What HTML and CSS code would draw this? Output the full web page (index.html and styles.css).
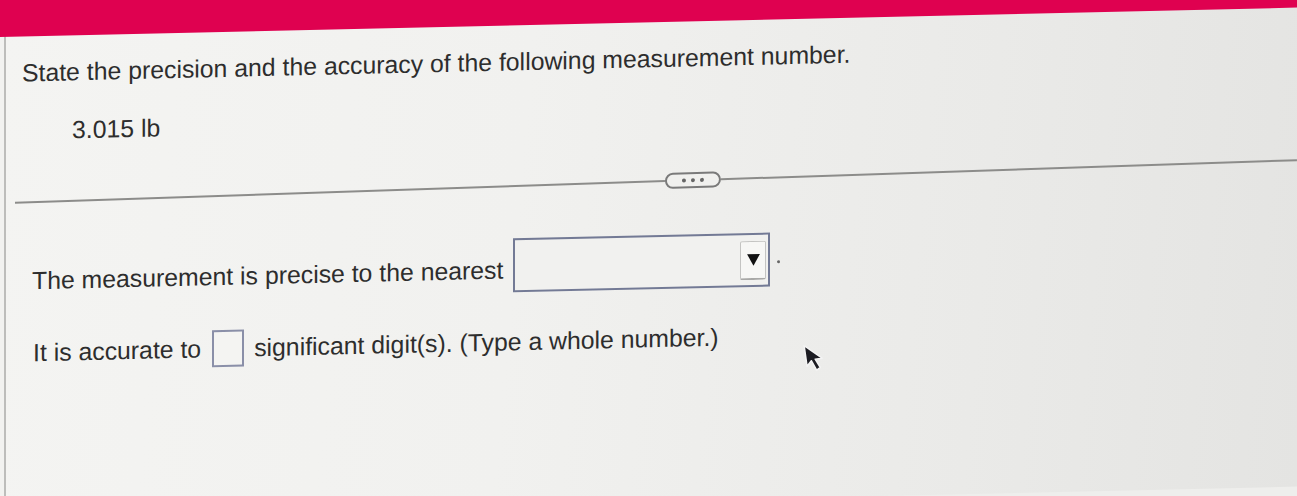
FILE: index.html
```html
<!DOCTYPE html>
<html lang="en">
<head>
<meta charset="utf-8">
<title>Measurement question</title>
<link rel="stylesheet" href="styles.css">
</head>
<body>
<div class="screen">
  <div class="topbar"></div>
  <div class="content">
    <p class="question">State the precision and the accuracy of the following measurement number.</p>
    <p class="value">3.015 lb</p>
    <div class="divider">
      <span class="rule short"></span>
      <span class="pill"><i></i><i></i><i></i></span>
      <span class="rule long"></span>
    </div>
    <div class="row row-precise">
      <span class="label">The measurement is precise to the nearest</span>
      <span class="select">
        <span class="select-btn">
          <svg width="15" height="15" viewBox="0 0 14 14"><path d="M1 2 H13 L7 13 Z" fill="#111"/></svg>
        </span>
      </span>
      <span class="dot"></span>
    </div>
    <div class="row row-accurate">
      <span>It is accurate to</span>
      <span class="answer"></span>
      <span>significant digit(s). (Type a whole number.)</span>
    </div>
  </div>
</div>
<svg class="cursor" width="24" height="30" viewBox="0 0 24 30">
  <path d="M2 1 L2 22 L7 17 L11 27 L15 25 L11 16 L18 16 Z" fill="#1c1c22" stroke="#f4f4f4" stroke-width="1.5" stroke-linejoin="round"/>
</svg>
</body>
</html>
```

FILE: styles.css
```css
html, body {
  margin: 0;
  padding: 0;
  overflow: hidden;
}
body {
  width: 1297px;
  height: 496px;
  background: #eeeeec;
  font-family: "Liberation Sans", Arial, sans-serif;
  color: #2d2d2d;
  position: relative;
}
.screen {
  width: 1297px;
  height: 526px;
  transform: skewY(-1.3deg);
  transform-origin: 0 0;
  background: linear-gradient(95deg, #f4f4f2 0%, #f1f1ef 40%, #eaeae8 75%, #e4e4e2 100%);
  box-shadow: inset 4px 0 0 #f2f2f0, inset 6px 0 0 #bdbdbb;
}
.topbar {
  height: 37px;
  background: #df0150;
  margin-top: -10px;
  padding-top: 10px;
}
.content {
  padding-left: 22px;
}
.question {
  margin: 23px 0 0 0;
  font-size: 24.8px;
  line-height: 28px;
}
.value {
  margin: 30px 0 0 50px;
  font-size: 24.8px;
  line-height: 28px;
}
.divider {
  display: flex;
  align-items: center;
  margin: 49px 0 0 -7px;
  height: 16px;
  transform: rotate(-0.6deg);
  transform-origin: 0 50%;
}
.rule {
  height: 2px;
  background: #8c8c8a;
}
.rule.short { width: 699px; }
.rule.long { width: 620px; }
.pill {
  display: flex;
  align-items: center;
  justify-content: center;
  gap: 5px;
  width: 56px;
  height: 12px;
  border: 2px solid #7a7a7a;
  border-radius: 8px;
  background: #f0f0ee;
}
.pill i {
  width: 4px;
  height: 4px;
  border-radius: 50%;
  background: #666;
}
.row {
  display: flex;
  align-items: center;
  font-size: 24.8px;
  line-height: 28px;
  margin-left: 10px;
}
.row-precise {
  margin-top: 39px;
}
.label {
  margin-top: 9px;
}
.select {
  display: flex;
  justify-content: flex-end;
  align-items: center;
  width: 253px;
  height: 50px;
  margin-left: 10px;
  border: 2px solid #737a95;
  background: #f1f1ef;
}
.select-btn {
  display: flex;
  align-items: center;
  justify-content: center;
  width: 24px;
  height: 36px;
  margin-right: 2px;
  border: 1px solid #c4c4c2;
  border-bottom: 2px solid #a9a9a7;
  border-radius: 2px;
  background: #f7f7f5;
}
.dot {
  width: 3px;
  height: 3px;
  margin: 4px 0 0 7px;
  border-radius: 50%;
  background: #666;
}
.row-accurate {
  margin-top: 31px;
  margin-left: 11px;
}
.answer {
  width: 28px;
  height: 33px;
  margin: 0 10px 0 11px;
  border: 2px solid #8a8fa8;
  background: #f4f4f2;
}
.cursor {
  position: absolute;
  left: 804px;
  top: 343px;
  transform: rotate(-8deg);
}
```
